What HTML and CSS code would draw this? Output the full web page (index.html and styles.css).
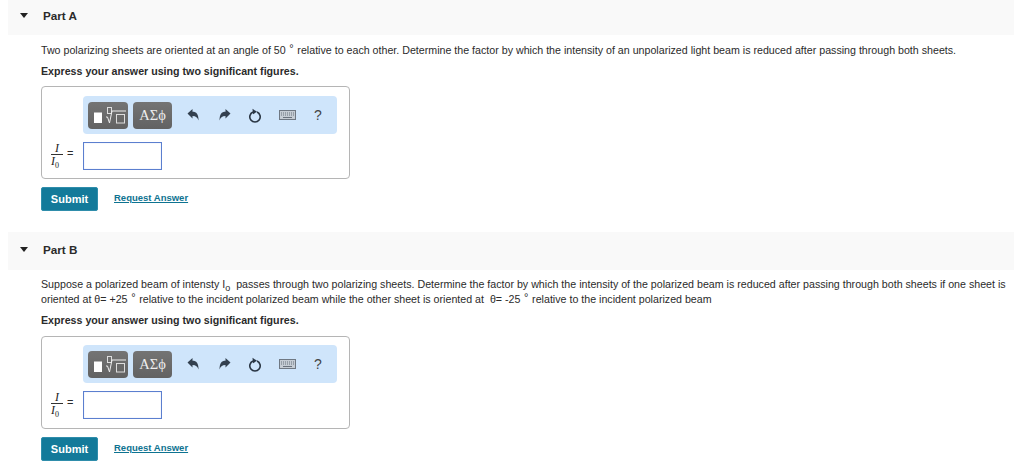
FILE: index.html
```html
<!DOCTYPE html>
<html lang="en">
<head>
<meta charset="utf-8">
<title>Parts</title>
<link rel="stylesheet" href="styles.css">
</head>
<body>
<section class="part part-a">
  <header class="part-head"><span class="caret"></span><h2>Part A</h2></header>
  <div class="body">
    <p class="prompt">Two polarizing sheets are oriented at an angle of 50 <sup class="deg">°</sup> relative to each other. Determine the factor by which the intensity of an unpolarized light beam is reduced after passing through both sheets.</p>
    <p class="hint">Express your answer using two significant figures.</p>
    <div class="answer">
      <div class="toolbar">
        <div class="tbtn t1"><svg width="40" height="27" viewBox="0 0 40 27"><rect x="6" y="10.500" width="8" height="10.500" fill="#fff"/><rect x="19.500" y="5.500" width="4" height="6" fill="none" stroke="#ddd"/><path d="M18 15h1.500l2 6 2.500-12h14" fill="none" stroke="#eee"/><rect x="28.500" y="12.500" width="8" height="8.500" fill="none" stroke="#ddd"/></svg></div>
        <div class="tbtn t2">ΑΣϕ</div>
        <svg class="ic i-undo" width="14" height="14" viewBox="0 0 14 14"><path d="M1.500 5.500 6.500 1v2.700c4 0 6 2.300 6 8.800-1-3-2.500-4.500-6-4.500v2.500z" fill="#33404f"/></svg>
        <svg class="ic i-redo" width="14" height="14" viewBox="0 0 14 14"><path d="M12.500 5.500 7.500 1v2.700c-4 0-6 2.300-6 8.800 1-3 2.500-4.500 6-4.500v2.500z" fill="#33404f"/></svg>
        <svg class="ic i-reset" width="14" height="15" viewBox="0 0 14 15"><path d="M9 4a5.200 5.200 0 1 1-4 0" fill="none" stroke="#2a3644" stroke-width="1.600"/><path d="M4.500 0.800 9 3.800 5 6.200z" fill="#2a3644"/></svg>
        <svg class="ic i-kbd" width="17" height="10" viewBox="0 0 17 10"><rect x=".5" y=".5" width="16" height="9" fill="#c5ccd4" stroke="#6f7883"/><path d="M2 3h13M2 5h13" stroke="#69727d" stroke-dasharray="1 1"/><path d="M4 7.500h9" stroke="#69727d"/></svg>
        <span class="q">?</span>
      </div>
      <div class="eq">
        <span class="frac"><i>I</i><i class="den">I<sub>0</sub></i></span>
        <span class="equals">=</span>
        <span class="field"></span>
      </div>
    </div>
    <div class="actions"><button class="submit">Submit</button><a class="req" href="#">Request Answer</a></div>
  </div>
</section>
<section class="part part-b">
  <header class="part-head"><span class="caret"></span><h2>Part B</h2></header>
  <div class="body">
    <p class="prompt">Suppose a polarized beam of intensty I<sub class="low">o</sub> &nbsp;passes through two polarizing sheets. Determine the factor by which the intensity of the polarized beam is reduced after passing through both sheets if one sheet is oriented at θ= +25 <sup class="deg">°</sup> relative to the incident polarized beam while the other sheet is oriented at &nbsp;θ= -25 <sup class="deg">°</sup> relative to the incident polarized beam</p>
    <p class="hint">Express your answer using two significant figures.</p>
    <div class="answer">
      <div class="toolbar">
        <div class="tbtn t1"><svg width="40" height="27" viewBox="0 0 40 27"><rect x="6" y="10.500" width="8" height="10.500" fill="#fff"/><rect x="19.500" y="5.500" width="4" height="6" fill="none" stroke="#ddd"/><path d="M18 15h1.500l2 6 2.500-12h14" fill="none" stroke="#eee"/><rect x="28.500" y="12.500" width="8" height="8.500" fill="none" stroke="#ddd"/></svg></div>
        <div class="tbtn t2">ΑΣϕ</div>
        <svg class="ic i-undo" width="14" height="14" viewBox="0 0 14 14"><path d="M1.500 5.500 6.500 1v2.700c4 0 6 2.300 6 8.800-1-3-2.500-4.500-6-4.500v2.500z" fill="#33404f"/></svg>
        <svg class="ic i-redo" width="14" height="14" viewBox="0 0 14 14"><path d="M12.500 5.500 7.500 1v2.700c-4 0-6 2.300-6 8.800 1-3 2.500-4.500 6-4.500v2.500z" fill="#33404f"/></svg>
        <svg class="ic i-reset" width="14" height="15" viewBox="0 0 14 15"><path d="M9 4a5.200 5.200 0 1 1-4 0" fill="none" stroke="#2a3644" stroke-width="1.600"/><path d="M4.500 0.800 9 3.800 5 6.200z" fill="#2a3644"/></svg>
        <svg class="ic i-kbd" width="17" height="10" viewBox="0 0 17 10"><rect x=".5" y=".5" width="16" height="9" fill="#c5ccd4" stroke="#6f7883"/><path d="M2 3h13M2 5h13" stroke="#69727d" stroke-dasharray="1 1"/><path d="M4 7.500h9" stroke="#69727d"/></svg>
        <span class="q">?</span>
      </div>
      <div class="eq">
        <span class="frac"><i>I</i><i class="den">I<sub>0</sub></i></span>
        <span class="equals">=</span>
        <span class="field"></span>
      </div>
    </div>
    <div class="actions"><button class="submit">Submit</button><a class="req" href="#">Request Answer</a></div>
  </div>
</section>
</body>
</html>
```
FILE: styles.css
```css
* { box-sizing: border-box; }
html, body { margin: 0; padding: 0; }
body {
  width: 1024px;
  height: 471px;
  overflow: hidden;
  background: #fff;
  font-family: "Liberation Sans", Arial, sans-serif;
  color: #2b2b2b;
  font-size: 10.67px;
  padding-left: 8px;
}
.part-head {
  width: 1006px;
  background: #f9f9f9;
  display: flex;
  align-items: center;
  padding-left: 12px;
}
.part-a .part-head { height: 35px; padding-bottom: 4px; }
.part-b { margin-top: 21px; }
.part-b .part-head { height: 38px; padding-bottom: 3px; }
.caret {
  width: 0;
  height: 0;
  border-left: 4.5px solid transparent;
  border-right: 4.5px solid transparent;
  border-top: 5px solid #222;
  margin-right: 15px;
}
.part-head h2 { margin: 0; font-size: 11.7px; font-weight: 700; color: #2b2b2b; }
.body { padding-left: 33px; }
.prompt { margin: 0; line-height: 15px; width: 970px; }
.part-a .prompt { padding-top: 8px; }
.part-b .prompt { padding-top: 7px; }
.hint { margin: 6px 0 0; font-weight: 700; line-height: 15px; }
.deg { font-size: 11px; line-height: 0; vertical-align: 2px; margin: 0 0.7px; }
.low { font-size: 9px; line-height: 0; vertical-align: -3px; }
.answer {
  width: 309px;
  height: 93px;
  margin-top: 7px;
  border: 1px solid #b5b5b5;
  border-radius: 4px;
  padding: 9px 0 0 41px;
}
.part-b .answer { margin-top: 8px; padding-top: 8px; }
.toolbar {
  width: 254px;
  height: 38px;
  background: #cfe5fb;
  border-radius: 4px;
  display: flex;
  align-items: center;
  padding-left: 5px;
}
.tbtn {
  height: 27px;
  background: linear-gradient(#747474, #626262);
  border-radius: 4px;
  color: #eee;
  display: flex;
  align-items: center;
  justify-content: center;
}
.t1 { width: 40px; }
.t2 {
  width: 39px;
  margin-left: 5px;
  font-family: "Liberation Serif", serif;
  font-size: 14.5px;
}
.ic { flex: none; }
.i-undo { margin-left: 14px; }
.i-redo { margin-left: 18px; }
.i-reset { margin-left: 16px; }
.i-kbd { margin-left: 17px; }
.q { margin-left: 18px; font-size: 14px; color: #444; }
.eq { display: flex; align-items: flex-start; margin-top: 8px; margin-left: -32px; }
.frac {
  display: inline-flex;
  flex-direction: column;
  align-items: center;
  width: 12px;
  font-family: "Liberation Serif", serif;
  font-size: 12px;
  line-height: 12px;
  color: #222;
}
.den { border-top: 1px solid #333; width: 12px; text-align: left; }
.den sub { font-size: 8px; font-style: normal; line-height: 0; }
.equals { margin-left: 4px; margin-top: 5px; line-height: 12px; width: 8px; font-size: 11px; }
.field {
  width: 79px;
  height: 28px;
  margin-left: 8px;
  border: 1px solid #5b7fcf;
  box-shadow: inset 0 0 1px #9fb6e6;
  background: #fff;
}
.actions { display: flex; align-items: center; margin-top: 8px; }
.submit {
  width: 57px;
  height: 24px;
  background: #137a9a;
  color: #fff;
  border: 1px solid #2f8dab;
  border-radius: 2px;
  font: 700 11px "Liberation Sans", Arial, sans-serif;
  padding: 0;
}
.req {
  margin-left: 16px;
  margin-bottom: 3px;
  color: #0e7391;
  font-size: 9.5px;
  font-weight: 700;
  text-decoration: underline;
}
```
